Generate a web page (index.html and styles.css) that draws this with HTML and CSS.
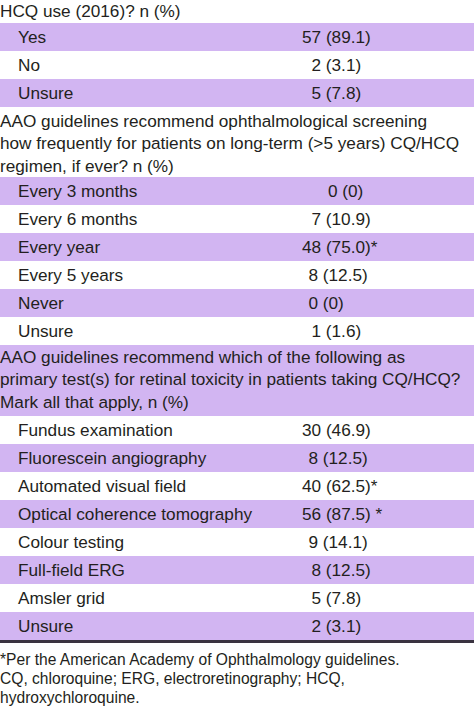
FILE: index.html
```html
<!DOCTYPE html>
<html lang="en">
<head>
<meta charset="utf-8">
<title>AAO guidelines survey</title>
<link rel="stylesheet" href="styles.css">
</head>
<body>
<div class="sheet">
  <div class="q q-first">HCQ use (2016)? n (%)</div>
  <div class="row alt"><span class="lab">Yes</span><span class="val">57 (89.1)</span></div>
  <div class="row"><span class="lab">No</span><span class="val s2">2 (3.1)</span></div>
  <div class="row alt"><span class="lab">Unsure</span><span class="val s2">5 (7.8)</span></div>

  <div class="q q-mid">AAO guidelines recommend ophthalmological screening<br>how frequently for patients on long-term (&gt;5 years) CQ/HCQ<br>regimen, if ever? n (%)</div>
  <div class="row alt"><span class="lab">Every 3 months</span><span class="val s3">0 (0)</span></div>
  <div class="row"><span class="lab">Every 6 months</span><span class="val s2">7 (10.9)</span></div>
  <div class="row alt"><span class="lab">Every year</span><span class="val">48 (75.0)*</span></div>
  <div class="row"><span class="lab">Every 5 years</span><span class="val s1">8 (12.5)</span></div>
  <div class="row alt"><span class="lab">Never</span><span class="val s1">0 (0)</span></div>
  <div class="row"><span class="lab">Unsure</span><span class="val s2">1 (1.6)</span></div>

  <div class="q q-alt">AAO guidelines recommend which of the following as<br>primary test(s) for retinal toxicity in patients taking CQ/HCQ?<br>Mark all that apply, n (%)</div>
  <div class="row"><span class="lab">Fundus examination</span><span class="val">30 (46.9)</span></div>
  <div class="row alt"><span class="lab">Fluorescein angiography</span><span class="val s1">8 (12.5)</span></div>
  <div class="row"><span class="lab">Automated visual field</span><span class="val">40 (62.5)*</span></div>
  <div class="row alt"><span class="lab">Optical coherence tomography</span><span class="val s0">56 (87.5) *</span></div>
  <div class="row"><span class="lab">Colour testing</span><span class="val s1">9 (14.1)</span></div>
  <div class="row alt"><span class="lab">Full-field ERG</span><span class="val s2">8 (12.5)</span></div>
  <div class="row"><span class="lab">Amsler grid</span><span class="val s2">5 (7.8)</span></div>
  <div class="row alt last"><span class="lab">Unsure</span><span class="val s2">2 (3.1)</span></div>

  <div class="notes">
    <p>*Per the American Academy of Ophthalmology guidelines.<br>CQ, chloroquine; ERG, electroretinography; HCQ,<br>hydroxychloroquine.</p>
  </div>
</div>
</body>
</html>
```
FILE: styles.css
```css
html, body {
  margin: 0;
  padding: 0;
  background: #ffffff;
}

.sheet {
  width: 474px;
  overflow: hidden;
  font-family: "Liberation Sans", Arial, sans-serif;
  font-size: 17.2px;
  color: #231f20;
}

.q {
  line-height: 22.5px;
  padding: 3px 0 0 0;
  height: 67.5px;
  white-space: nowrap;
}

.q-first {
  height: 22.7px;
  line-height: 22.7px;
  padding: 0;
}

.q-mid {
  padding-top: 3px;
}

.q-alt {
  background: #d2b5f2;
  padding-top: 0.5px;
  padding-bottom: 3px;
}

.row {
  display: grid;
  grid-template-columns: 302px 1fr;
  height: 28px;
  line-height: 28px;
}

.row.alt {
  background: #d2b5f2;
}

.row.last {
  border-bottom: 3px solid #3a3340;
}

.lab {
  padding-left: 18px;
  white-space: nowrap;
}

.val {
  white-space: nowrap;
}

.s0 { padding-left: 0; }
.s1 { padding-left: 6.5px; }
.s2 { padding-left: 9.5px; }
.s3 { padding-left: 26px; }

.notes {
  padding-top: 7px;
  font-size: 15.6px;
  line-height: 19px;
  white-space: nowrap;
}

.notes p {
  margin: 0;
}
```
